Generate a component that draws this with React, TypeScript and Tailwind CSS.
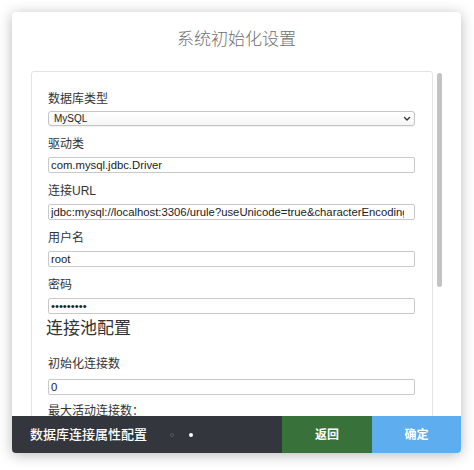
import React from "react";

function Field({
  label,
  value,
  type = "text",
  mb = "mb-[10px]",
  lmb = "mb-[5px]",
}: {
  label: string;
  value: string;
  type?: string;
  mb?: string;
  lmb?: string;
}) {
  return (
    <div className={mb}>
      <div className={`text-[12px] leading-4 text-[#333] ${lmb}`}>{label}</div>
      <input
        readOnly
        type={type}
        value={value}
        className="block w-full h-4 border border-[#c9c9c9] rounded-[2px] pl-[2px] pr-[10px] text-[11.3px] leading-[14px] text-[#222] outline-none bg-white font-['Liberation_Sans','Noto_Sans_CJK_SC',sans-serif]"
      />
    </div>
  );
}

export default function App() {
  return (
    <div className="w-[474px] h-[470px] bg-white pt-[12px] pl-[12px] font-['Liberation_Sans','Noto_Sans_CJK_SC',sans-serif]">
      <div className="w-[449px] h-[441px] bg-white rounded-[4px] overflow-hidden flex flex-col shadow-[0_2px_14px_rgba(0,0,0,0.28)]">
        {/* Title */}
        <div className="h-[59px] shrink-0 flex items-start justify-center pt-[17px]">
          <div className="text-[17px] leading-[22px] text-[#707070] font-light">系统初始化设置</div>
        </div>

        {/* Body */}
        <div className="flex-1 overflow-hidden flex flex-row pl-[19px]">
          <div className="w-[402px] shrink-0 border border-[#e3e3e3] rounded-t-[3px] pt-[19px] pl-[16px] pr-[17px] self-start">
            <div className="mb-[10px]">
              <div className="text-[12px] leading-4 text-[#333] mb-[4px]">数据库类型</div>
              <div className="h-[15px] w-full border border-[#c4c4c4] rounded-[3px] bg-gradient-to-b from-white to-[#f6f6f6] flex items-center justify-between pl-[5px] pr-[3px] shadow-[0_1px_1px_rgba(0,0,0,0.06)]">
                <span className="text-[10px] leading-[12px] text-[#222]">MySQL</span>
                <svg width="8" height="6" viewBox="0 0 8 6" fill="none">
                  <path d="M1.5 1.5 L4 4 L6.5 1.5" stroke="#333" strokeWidth="1.4" strokeLinecap="round" strokeLinejoin="round" />
                </svg>
              </div>
            </div>
            <Field label="驱动类" value="com.mysql.jdbc.Driver" />
            <Field
              label="连接URL"
              value="jdbc:mysql://localhost:3306/urule?useUnicode=true&characterEncoding=utf-8"
            />
            <Field label="用户名" value="root" />
            <Field label="密码" type="password" value="123456789" mb="mb-[4px]" />
            <div className="text-[17px] leading-[22px] text-[#333] -ml-[2px] mb-[16px]">连接池配置</div>
            <Field label="初始化连接数" value="0" lmb="mb-[7px]" mb="mb-[8px]" />
            <Field label="最大活动连接数：" value="20" lmb="mb-[7px]" mb="mb-[8px]" />
          </div>
          <div className="ml-[4px] mt-[2px] w-[5px] h-[214px] rounded-full bg-[#c3c3c3] shrink-0" />
        </div>

        {/* Footer */}
        <div className="h-[37px] shrink-0 flex flex-row">
          <div className="flex-1 bg-[#33363d] flex items-center pl-[18px]">
            <span className="text-[13px] leading-4 text-white font-medium">数据库连接属性配置</span>
            <span className="ml-[23px] w-[4px] h-[4px] rounded-full border border-[#55585f]" />
            <span className="ml-[15px] w-[4px] h-[4px] rounded-full bg-white" />
          </div>
          <div className="w-[90px] bg-[#38723a] flex items-center justify-center">
            <span className="text-[12px] leading-4 text-white font-bold">返回</span>
          </div>
          <div className="w-[89px] bg-[#5eadee] flex items-center justify-center">
            <span className="text-[12px] leading-4 text-white font-bold">确定</span>
          </div>
        </div>
      </div>
    </div>
  );
}
